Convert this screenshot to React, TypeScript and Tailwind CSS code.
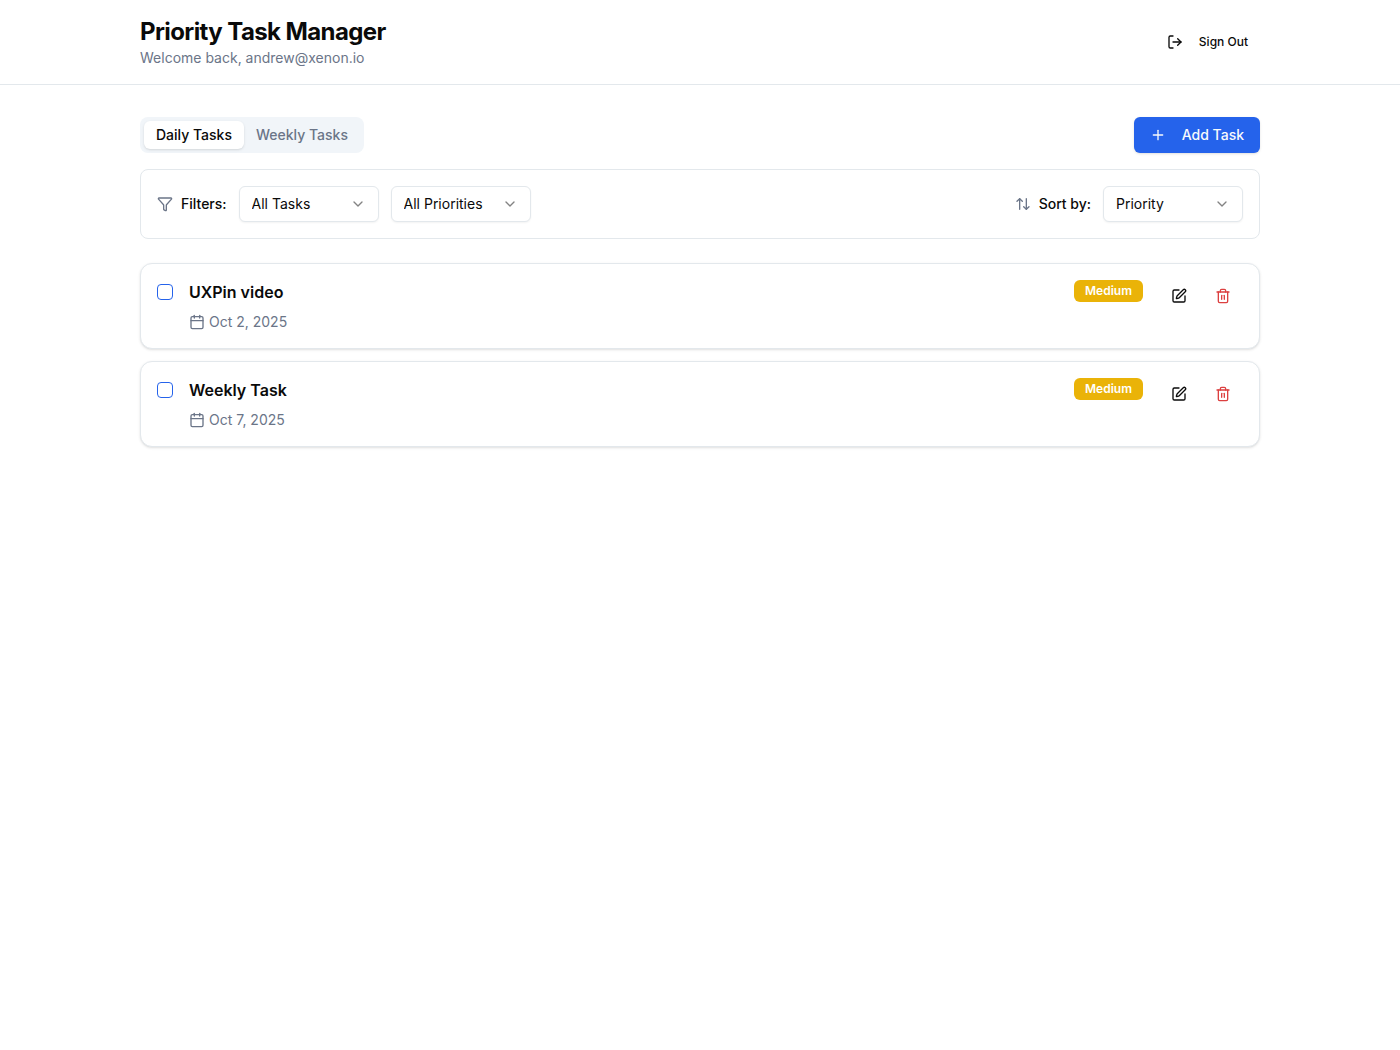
import { useState } from 'react';
import type { ReactNode } from 'react';
import { ArrowUpDown, Calendar, ChevronDown, Funnel, LogOut, Plus, SquarePen, Trash2 } from 'lucide-react';
import { clsx } from 'clsx';

type Priority = 'High' | 'Medium' | 'Low';

interface Task {
  id: number;
  title: string;
  due: string;
  priority: Priority;
}

const TABS = ['Daily Tasks', 'Weekly Tasks'];

const TASKS: Task[] = [
  { id: 1, title: 'UXPin video', due: 'Oct 2, 2025', priority: 'Medium' },
  { id: 2, title: 'Weekly Task', due: 'Oct 7, 2025', priority: 'Medium' },
];

const PRIORITY_STYLES: Record<Priority, string> = {
  High: 'bg-red-500',
  Medium: 'bg-[#eab308]',
  Low: 'bg-green-500',
};

interface SelectProps {
  label: string;
  id: string;
  options: string[];
}

const Select = ({ label, id, options }: SelectProps) => (
  <div className="relative w-[140px]">
    <select
      id={id}
      aria-label={label}
      className="h-9 w-full appearance-none rounded-md border border-[#e3e8ec] bg-white pr-8 pl-3 text-sm shadow-xs"
    >
      {options.map(option => (
        <option key={option}>{option}</option>
      ))}
    </select>
    <ChevronDown className="pointer-events-none absolute inset-y-0 right-[13px] my-auto size-4 opacity-50" />
  </div>
);

const FieldLabel = ({ htmlFor, icon, children }: { htmlFor: string; icon: ReactNode; children: ReactNode }) => (
  <label htmlFor={htmlFor} className="flex items-center gap-2 text-sm font-medium">
    {icon}
    {children}
  </label>
);

const TaskCard = ({ task }: { task: Task }) => {
  const [done, setDone] = useState(false);

  return (
    <li className="flex items-start gap-4 rounded-xl border border-[#e3e8ec] bg-white p-4 shadow-sm">
      <input
        id={`task-${task.id}`}
        type="checkbox"
        checked={done}
        onChange={() => setDone(!done)}
        className="mt-1 size-4 shrink-0 appearance-none rounded-sm border border-[#2563eb] checked:bg-[#2563eb]"
      />

      <div className="min-w-0 flex-1 space-y-2">
        <label
          htmlFor={`task-${task.id}`}
          className={clsx('block text-base font-semibold', done && 'text-[#6b7588] line-through')}
        >
          {task.title}
        </label>
        <p className="flex items-center gap-1 text-sm text-[#6b7588]">
          <Calendar className="size-4" />
          {task.due}
        </p>
      </div>

      <span
        className={clsx(
          'rounded-md border border-transparent px-2.5 py-0.5 text-xs font-semibold text-white',
          PRIORITY_STYLES[task.priority]
        )}
      >
        {task.priority}
      </span>

      <div className="flex gap-1">
        <button type="button" aria-label={`Edit ${task.title}`} className="h-8 rounded-md px-3 hover:bg-slate-100">
          <SquarePen className="size-4" />
        </button>
        <button
          type="button"
          aria-label={`Delete ${task.title}`}
          className="h-8 rounded-md px-3 text-[#dc4040] hover:bg-slate-100"
        >
          <Trash2 className="size-4" />
        </button>
      </div>
    </li>
  );
};

const App = () => {
  const [activeTab, setActiveTab] = useState(TABS[0]);

  return (
    <div className="min-h-screen bg-white font-['Inter',sans-serif] text-neutral-950">
      <header className="border-b border-[#e3e8ec]">
        <div className="mx-auto flex max-w-6xl items-center justify-between p-4">
          <div>
            <h1 className="text-2xl font-bold tracking-tight">Priority Task Manager</h1>
            <p className="text-sm text-[#6b7588]">Welcome back, andrew@xenon.io</p>
          </div>
          <button
            type="button"
            className="flex h-8 items-center gap-4 rounded-md px-3 text-xs font-medium hover:bg-slate-100"
          >
            <LogOut className="size-4" />
            Sign Out
          </button>
        </div>
      </header>

      <main className="mx-auto max-w-6xl px-4 py-8">
        <div className="flex items-center justify-between">
          <div role="tablist" className="flex h-9 rounded-lg bg-[#f1f5f9] p-1">
            {TABS.map(tab => (
              <button
                key={tab}
                type="button"
                role="tab"
                aria-selected={tab === activeTab}
                onClick={() => setActiveTab(tab)}
                className={clsx(
                  'rounded-md px-3 text-sm font-medium',
                  tab === activeTab ? 'bg-white shadow-sm' : 'text-[#6b7588]'
                )}
              >
                {tab}
              </button>
            ))}
          </div>
          <button
            type="button"
            className="flex h-9 items-center gap-4 rounded-md bg-[#2563eb] px-4 text-sm font-medium text-slate-50 shadow-sm hover:bg-blue-700"
          >
            <Plus className="size-4" />
            Add Task
          </button>
        </div>

        <section className="mt-4 flex flex-wrap items-center justify-between gap-4 rounded-lg border border-[#e3e8ec] p-4">
          <div className="flex flex-wrap items-center gap-3">
            <FieldLabel htmlFor="status" icon={<Funnel className="size-4 text-[#6b7588]" />}>
              Filters:
            </FieldLabel>
            <Select id="status" label="Filter by status" options={['All Tasks', 'Active', 'Completed']} />
            <Select id="priority" label="Filter by priority" options={['All Priorities', 'High', 'Medium', 'Low']} />
          </div>
          <div className="flex items-center gap-3">
            <FieldLabel htmlFor="sort" icon={<ArrowUpDown className="size-4 text-[#6b7588]" />}>
              Sort by:
            </FieldLabel>
            <Select id="sort" label="Sort by" options={['Priority', 'Due Date']} />
          </div>
        </section>

        <ul className="mt-6 space-y-3">
          {TASKS.map(task => (
            <TaskCard key={task.id} task={task} />
          ))}
        </ul>
      </main>
    </div>
  );
};

export default App;
